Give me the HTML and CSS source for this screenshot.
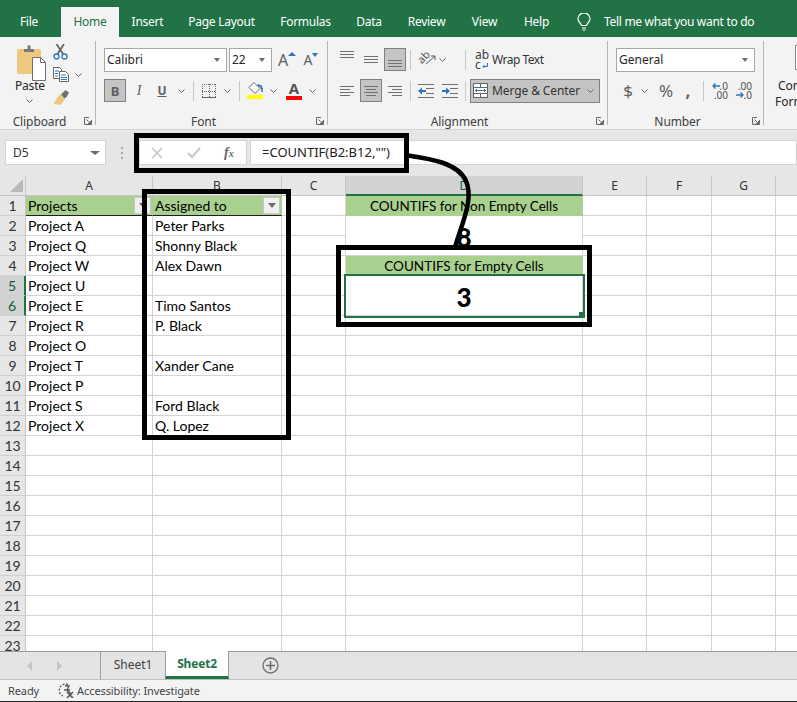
FILE: index.html
```html
<!DOCTYPE html>
<html lang="en">
<head>
<meta charset="utf-8">
<title>COUNTIF for empty cells</title>
<link rel="stylesheet" href="styles.css">
</head>
<body>
<div class="app">
  <nav class="tabs">
    <span class="tab first">File</span>
    <span class="tab active">Home</span>
    <span class="tab">Insert</span>
    <span class="tab">Page Layout</span>
    <span class="tab">Formulas</span>
    <span class="tab">Data</span>
    <span class="tab">Review</span>
    <span class="tab">View</span>
    <span class="tab">Help</span>
    <svg class="bulb" width="14" height="18" viewBox="0 0 14 18" fill="none" stroke="#fff" stroke-width="1.2"><path d="M4.5 12.5C4 10 1 9 1 6a6 6 0 0 1 12 0c0 3-3 4-3.500 6.500z"/><path d="M5 15h4M5.500 17h3"/></svg>
    <span class="tell">Tell me what you want to do</span>
  </nav>

  <section class="ribbon">
    <div class="group clipboard">
      <div class="group-body clip-body">
        <div class="paste">
          <svg width="30" height="36" viewBox="0 0 30 36"><rect x="0" y="4" width="24" height="25" rx="2" fill="#edc87e"/><path d="M7 7V4h3.500V1.500a1.500 1.500 0 0 1 3 0V4H17v3z" fill="#7a7a7a"/><path d="M15.500 12.500h8l5 5v18h-13z" fill="#fff" stroke="#6f6f6f"/><path d="M23.500 12.500v5h5" fill="none" stroke="#6f6f6f"/></svg>
          <span class="paste-label">Paste</span>
          <svg class="chev-svg" width="7" height="4" viewBox="0 0 7 4"><path d="M.5.500l3 3 3-3" fill="none" stroke="#666"/></svg>
        </div>
        <div class="clip-tools">
          <span class="clip-tool"><svg width="15" height="16" viewBox="0 0 15 16" fill="none"><path d="M3.500 0l6.500 10M11 0L4.500 10" stroke="#666" stroke-width="1.800"/><circle cx="3.500" cy="12.500" r="2.500" stroke="#2e75b6" stroke-width="1.300"/><circle cx="11.500" cy="12.500" r="2.500" stroke="#2e75b6" stroke-width="1.300"/></svg></span>
          <span class="clip-tool"><svg width="16" height="15" viewBox="0 0 16 15" fill="none"><path d="M.5.500h6l2 2v9h-8z" fill="#fff" stroke="#666"/><path d="M6.500 4.500h6l3 3v7h-9z" fill="#fff" stroke="#666"/><path d="M2 4h4M2 6.500h3M2 9h3M8 8h5M8 10.500h6M8 12.500h6" stroke="#2e75b6"/></svg><svg class="clip-chev" width="7" height="4" viewBox="0 0 7 4"><path d="M.5.500l3 3 3-3" fill="none" stroke="#666"/></svg></span>
          <span class="clip-tool"><svg width="16" height="15" viewBox="0 0 16 15"><path d="M7 4l5 5-4 5.500c-3 .5-6 0-8-1.500 2-1 3-3 4-5z" fill="#edc87e"/><path d="M8 4.500L12.500 0 16 2.500l-2 4-2.500 2z" fill="#707070"/></svg></span>
        </div>
      </div>
      <div class="group-foot"><span class="group-name">Clipboard</span><svg class="launcher" width="8" height="8" viewBox="0 0 8 8" fill="none" stroke="#666"><path d="M7.500 3V7.500H.5V.5H5M2.500 2.500l4 4M6.500 4v2.500H4"/></svg></div>
    </div>

    <div class="group font-group">
      <div class="group-body">
        <div class="row">
          <div class="combo font-name"><span>Calibri</span><i class="tri"></i></div>
          <div class="combo font-size"><span>22</span><i class="tri"></i></div>
          <span class="grow letter-lg">A<svg width="8" height="4" viewBox="0 0 8 4"><path d="M0 4l4-4 4 4z" fill="#2e75b6"/></svg></span>
          <span class="grow letter-sm">A<svg width="6" height="4" viewBox="0 0 6 4"><path d="M0 0h6L3 4z" fill="#2e75b6"/></svg></span>
        </div>
        <div class="row">
          <span class="btn on wide22 strong">B</span>
          <span class="btn wide22 italic">I</span>
          <span class="btn wide22 under">U</span>
          <svg class="chev" width="7" height="4" viewBox="0 0 7 4"><path d="M.5.500l3 3 3-3" fill="none" stroke="#666"/></svg>
          <i class="sep"></i>
          <span class="btn wide21"><svg width="14" height="14" viewBox="0 0 14 14" fill="none" stroke="#666" stroke-dasharray="1 1"><path d="M0 .5h14M0 7.500h14M.5 0v14M7.500 0v14M13.500 0v14"/><path d="M0 13.500h14" stroke-dasharray="none"/></svg></span>
          <svg class="chev" width="7" height="4" viewBox="0 0 7 4"><path d="M.5.500l3 3 3-3" fill="none" stroke="#666"/></svg>
          <i class="sep"></i>
          <span class="btn wide21 swatch"><svg width="16" height="17" viewBox="0 0 16 17"><path d="M7 .5l6 6-5 5-6-6z" fill="#fff" stroke="#666"/><path d="M10 4c2 0 4 1 4 3l2 0-1.500-3.500L11 2z" fill="#2e75b6"/><path d="M15 6v4" stroke="#2e75b6" stroke-width="1.500"/><rect y="13" width="16" height="4" fill="#ffff00"/></svg></span>
          <svg class="chev" width="7" height="4" viewBox="0 0 7 4"><path d="M.5.500l3 3 3-3" fill="none" stroke="#666"/></svg>
          <span class="btn color-a"><b>A</b><i class="bar"></i></span>
          <svg class="chev" width="7" height="4" viewBox="0 0 7 4"><path d="M.5.500l3 3 3-3" fill="none" stroke="#666"/></svg>
        </div>
      </div>
      <div class="group-foot"><span class="group-name">Font</span><svg class="launcher" width="8" height="8" viewBox="0 0 8 8" fill="none" stroke="#666"><path d="M7.500 3V7.500H.5V.5H5M2.500 2.500l4 4M6.500 4v2.500H4"/></svg></div>
    </div>

    <div class="group align-group">
      <div class="group-body">
        <div class="row">
          <span class="btn wide22 top"><svg width="14" height="7" viewBox="0 0 14 7" stroke="#707070"><path d="M0 .5h14M0 3.500h14M0 6.500h14"/></svg></span>
          <span class="btn wide22 ml2"><svg width="14" height="7" viewBox="0 0 14 7" stroke="#707070"><path d="M0 .5h14M0 3.500h14M0 6.500h14"/></svg></span>
          <span class="btn on wide22 ml2 bottom"><svg width="14" height="7" viewBox="0 0 14 7" stroke="#707070"><path d="M0 .5h14M0 3.500h14M0 6.500h14"/></svg></span>
          <i class="sep sep-align"></i>
          <span class="btn wide20 orient"><span class="orient-text">ab</span><svg width="10" height="10" viewBox="0 0 10 10" fill="none" stroke="#555"><path d="M0 9l9-8M5 1h4v4"/></svg></span>
          <svg class="chev chev-flush" width="7" height="4" viewBox="0 0 7 4"><path d="M.5.500l3 3 3-3" fill="none" stroke="#666"/></svg>
          <i class="sep sep-wide"></i>
          <span class="wrap-mark"><span>ab</span><span>c<svg width="6" height="6" viewBox="0 0 6 6" fill="none" stroke="#2e75b6"><path d="M5.500 0v3.500H1M2.500 2L1 3.500 2.500 5"/></svg></span></span>
          <span class="rib-text wrap-text">Wrap Text</span>
        </div>
        <div class="row">
          <span class="btn wide22"><svg width="14" height="10" viewBox="0 0 14 10" stroke="#707070"><path d="M0 .5h14M0 3.500h10M0 6.500h14M0 9.500h10"/></svg></span>
          <span class="btn on wide22 ml2"><svg width="14" height="10" viewBox="0 0 14 10" stroke="#707070"><path d="M0 .5h14M2 3.500h10M0 6.500h14M2 9.500h10"/></svg></span>
          <span class="btn wide22 ml2"><svg width="14" height="10" viewBox="0 0 14 10" stroke="#707070"><path d="M0 .5h14M4 3.500h10M0 6.500h14M4 9.500h10"/></svg></span>
          <i class="sep sep-align"></i>
          <span class="btn wide20"><svg width="16" height="14" viewBox="0 0 16 14"><path d="M0 .5h16M8 4.500h8M8 9.500h8M0 13.500h16" stroke="#707070"/><path d="M0 7l4-3.500V6h4v2H4v2.500z" fill="#2e75b6"/></svg></span>
          <span class="btn wide20 ml4"><svg width="16" height="14" viewBox="0 0 16 14"><path d="M0 .5h16M8 4.500h8M8 9.500h8M0 13.500h16" stroke="#707070"/><path d="M8 7L4 3.500V6H0v2h4v2.500z" fill="#2e75b6"/></svg></span>
          <i class="sep sep-merge"></i>
          <span class="merge"><svg width="15" height="15" viewBox="0 0 15 15" fill="none"><rect x=".5" y=".5" width="14" height="14" fill="#fff" stroke="#666"/><path d="M.5 4.500h14M.5 10.500h14M7.500 .5v4M7.500 10.500v4" stroke="#666"/><path d="M2.500 7.500h10M4 6l-1.500 1.500L4 9M11 6l1.500 1.500L11 9" stroke="#2e75b6"/></svg><span class="rib-text">Merge &amp; Center</span><svg class="merge-chev" width="7" height="4" viewBox="0 0 7 4"><path d="M.5.500l3 3 3-3" fill="none" stroke="#666"/></svg></span>
        </div>
      </div>
      <div class="group-foot"><span class="group-name">Alignment</span><svg class="launcher" width="8" height="8" viewBox="0 0 8 8" fill="none" stroke="#666"><path d="M7.500 3V7.500H.5V.5H5M2.500 2.500l4 4M6.500 4v2.500H4"/></svg></div>
    </div>

    <div class="group number-group">
      <div class="group-body">
        <div class="row">
          <div class="combo num-format"><span>General</span><i class="tri"></i></div>
        </div>
        <div class="row num-row">
          <span class="btn sym dollar">$</span>
          <svg class="chev chev-flush" width="7" height="4" viewBox="0 0 7 4"><path d="M.5.500l3 3 3-3" fill="none" stroke="#666"/></svg>
          <span class="btn sym percent">%</span>
          <span class="btn sym comma">,</span>
          <i class="sep sep-num"></i>
          <span class="btn decimal"><span class="dec-top"><svg width="8" height="6" viewBox="0 0 8 6"><path d="M8 3H1M3.500.5L1 3l2.500 2.500" fill="none" stroke="#2e75b6" stroke-width="1.300"/></svg>.0</span><span>.00</span></span>
          <span class="btn decimal dec2"><span>.00</span><span class="dec-top"><svg width="8" height="6" viewBox="0 0 8 6"><path d="M0 3h7M4.500.5L7 3 4.500 5.500" fill="none" stroke="#2e75b6" stroke-width="1.300"/></svg>.0</span></span>
        </div>
      </div>
      <div class="group-foot"><span class="group-name">Number</span><svg class="launcher" width="8" height="8" viewBox="0 0 8 8" fill="none" stroke="#666"><path d="M7.500 3V7.500H.5V.5H5M2.500 2.500l4 4M6.500 4v2.500H4"/></svg></div>
    </div>

    <div class="group cond-group">
      <svg class="cond-icon" width="24" height="25" viewBox="0 0 24 25" fill="#fff" stroke="#888"><rect x=".5" y=".5" width="23" height="24"/></svg>
      <span class="cond-text"><span class="cond-first">Conditional</span><br>Formatting</span>
    </div>
  </section>

  <section class="formula-bar">
    <div class="name-box"><span>D5</span><i class="tri tri-name"></i></div>
    <div class="grip"><i></i><i></i><i></i></div>
    <div class="fx-buttons">
      <svg width="12" height="12" viewBox="0 0 12 12" stroke="#c6c6c6" stroke-width="1.600"><path d="M1 1l10 10M11 1L1 11"/></svg>
      <svg width="14" height="12" viewBox="0 0 14 12" fill="none" stroke="#c6c6c6" stroke-width="2"><path d="M1 6l4 4 8-9"/></svg>
      <span class="fx">f<span class="fx-x">x</span></span>
    </div>
    <div class="formula-input">=COUNTIF(B2:B12,"")</div>
  </section>

  <section class="sheet">
    <table class="grid">
      <colgroup><col class="c-rh"><col class="c-a"><col class="c-b"><col class="c-c"><col class="c-d"><col class="c-e"><col class="c-f"><col class="c-g"><col class="c-h"></colgroup>
      <thead>
        <tr><th class="corner"><svg width="13" height="13" viewBox="0 0 13 13"><path d="M13 0v13H0z" fill="#b8b8b8"/></svg></th><th>A</th><th>B</th><th>C</th><th class="col-sel">D</th><th>E</th><th>F</th><th>G</th><th>H</th></tr>
      </thead>
      <tbody>
        <tr><th>1</th><td class="head-cell">Projects<i class="filter"></i></td><td class="head-cell">Assigned to<i class="filter"></i></td><td></td><td class="green" >COUNTIFS for Non Empty Cells</td><td></td><td></td><td></td><td></td></tr>
        <tr><th>2</th><td>Project A</td><td>Peter Parks</td><td></td><td rowspan="2" class="big">8</td><td></td><td></td><td></td><td></td></tr>
        <tr><th>3</th><td>Project Q</td><td>Shonny Black</td><td></td><td></td><td></td><td></td><td></td></tr>
        <tr><th>4</th><td>Project W</td><td>Alex Dawn</td><td></td><td class="green">COUNTIFS for Empty Cells</td><td></td><td></td><td></td><td></td></tr>
        <tr><th class="row-sel">5</th><td>Project U</td><td></td><td></td><td rowspan="2" class="big selected">3</td><td></td><td></td><td></td><td></td></tr>
        <tr><th class="row-sel">6</th><td>Project E</td><td>Timo Santos</td><td></td><td></td><td></td><td></td><td></td></tr>
        <tr><th>7</th><td>Project R</td><td>P. Black</td><td></td><td></td><td></td><td></td><td></td><td></td></tr>
        <tr><th>8</th><td>Project O</td><td></td><td></td><td></td><td></td><td></td><td></td><td></td></tr>
        <tr><th>9</th><td>Project T</td><td>Xander Cane</td><td></td><td></td><td></td><td></td><td></td><td></td></tr>
        <tr><th>10</th><td>Project P</td><td></td><td></td><td></td><td></td><td></td><td></td><td></td></tr>
        <tr><th>11</th><td>Project S</td><td>Ford Black</td><td></td><td></td><td></td><td></td><td></td><td></td></tr>
        <tr><th>12</th><td>Project X</td><td>Q. Lopez</td><td></td><td></td><td></td><td></td><td></td><td></td></tr>
        <tr><th>13</th><td></td><td></td><td></td><td></td><td></td><td></td><td></td><td></td></tr>
        <tr><th>14</th><td></td><td></td><td></td><td></td><td></td><td></td><td></td><td></td></tr>
        <tr><th>15</th><td></td><td></td><td></td><td></td><td></td><td></td><td></td><td></td></tr>
        <tr><th>16</th><td></td><td></td><td></td><td></td><td></td><td></td><td></td><td></td></tr>
        <tr><th>17</th><td></td><td></td><td></td><td></td><td></td><td></td><td></td><td></td></tr>
        <tr><th>18</th><td></td><td></td><td></td><td></td><td></td><td></td><td></td><td></td></tr>
        <tr><th>19</th><td></td><td></td><td></td><td></td><td></td><td></td><td></td><td></td></tr>
        <tr><th>20</th><td></td><td></td><td></td><td></td><td></td><td></td><td></td><td></td></tr>
        <tr><th>21</th><td></td><td></td><td></td><td></td><td></td><td></td><td></td><td></td></tr>
        <tr><th>22</th><td></td><td></td><td></td><td></td><td></td><td></td><td></td><td></td></tr>
        <tr><th>23</th><td></td><td></td><td></td><td></td><td></td><td></td><td></td><td></td></tr>
      </tbody>
    </table>
  </section>

  <section class="sheet-tabs">
    <svg class="nav-arrows" width="36" height="10" viewBox="0 0 36 10" fill="#c4c4c4"><path d="M5 0v10L0 5zM30 0v10l5-5z"/></svg>
    <span class="sheet-tab">Sheet1</span>
    <span class="sheet-tab current">Sheet2</span>
    <svg class="add-sheet" width="17" height="17" viewBox="0 0 17 17" fill="none" stroke="#6f6f6f" stroke-width="1.300"><circle cx="8.500" cy="8.500" r="7.500"/><path d="M8.500 4v9M4 8.500h9" stroke-width="1.600"/></svg>
  </section>

  <footer class="status">
    <span>Ready</span>
    <svg class="a11y" width="17" height="15" viewBox="0 0 17 15" fill="none" stroke="#555" stroke-width="1.300"><path d="M10 1.500A6 6 0 1 0 5 13" stroke-dasharray="2 1.500"/><path d="M7 3h4l-2 4 4 4M6 7h6" /><path d="M9 9l6 6M15 9l-6 6" stroke-width="1.600"/></svg>
    <span>Accessibility: Investigate</span>
  </footer>

  <div class="callout callout-formula"></div>
  <div class="callout callout-names"></div>
  <div class="callout callout-result"></div>
  <svg class="connector" width="80" height="100" viewBox="0 0 80 100" fill="none"><path d="M3 4C30 8 56 12 64 30C72 48 60 72 53 96" stroke="#000" stroke-width="4.500"/></svg>
</div>
</body>
</html>
```
FILE: styles.css
```css
* { box-sizing: border-box; }
html, body { margin: 0; padding: 0; }
body { width: 797px; height: 702px; overflow: hidden; background: #fff; }
.app { position: relative; width: 797px; height: 702px; overflow: hidden; font-family: "Noto Sans", sans-serif; font-size: 12px; color: #333; display: flex; flex-direction: column; }

/* Tab strip */
.tabs { height: 37px; flex: none; background: #217346; color: #fff; display: grid; grid-template-columns: 61px 58px 57px 91px 77px 50px 65px 51px 53px 41px 1fr; align-items: end; }
.tab { height: 30px; line-height: 30px; text-align: center; white-space: nowrap; letter-spacing: -.25px; }
.tab.first { padding-right: 3px; }
.tab.active { background: #f3f3f3; color: #217346; }
.bulb { justify-self: center; margin-bottom: 6px; }
.tell { height: 30px; line-height: 30px; white-space: nowrap; letter-spacing: -.3px; }

/* Ribbon */
.ribbon { height: 93px; flex: none; background: #f3f3f3; border-bottom: 1px solid #d2d2d2; display: flex; padding-top: 4px; }
.group { height: 84px; border-right: 1px solid #b6b6b6; display: flex; flex-direction: column; flex: none; }
.clipboard { width: 96px; }
.font-group { width: 232px; padding-left: 8px; }
.align-group { width: 280px; padding-left: 8px; }
.number-group { width: 156px; padding-left: 8px; }
.cond-group { border: 0; flex: 1; align-items: center; position: relative; overflow: hidden; }
.group-body { flex: 1; padding-top: 7px; display: flex; flex-direction: column; gap: 8px; }
.row { display: flex; align-items: center; height: 23px; }
.group-foot { height: 18px; margin-bottom: -5px; display: flex; align-items: center; color: #404040; }
.font-group .group-foot, .align-group .group-foot, .number-group .group-foot { margin-left: -8px; }
.group-name { flex: 1; text-align: center; letter-spacing: -.1px; }
.launcher { margin: 0 3px 0 5px; flex: none; }

.clip-body { flex-direction: row; gap: 0; padding-top: 0; }
.paste { width: 60px; padding: 4px 0 0 17px; display: flex; flex-direction: column; }
.paste-label { line-height: 16px; width: 29px; margin: -3px 0 0 -2px; color: #262626; letter-spacing: -.2px; }
.chev-svg { margin: 5px 0 0 9px; }
.clip-tools { display: flex; flex-direction: column; margin: -1px 0 0 -7px; }
.clip-tool { height: 23px; display: flex; align-items: center; width: 36px; }
.clip-chev { margin-left: 6px; }

.combo { height: 24px; background: #fff; border: 1px solid #a6a6a6; display: flex; align-items: center; padding: 0 5px 0 2px; color: #262626; flex: none; }
.combo span { flex: 1; }
.font-name { width: 123px; }
.font-size { width: 43px; margin-left: 2px; }
.num-format { width: 139px; }
.tri { width: 0; height: 0; border: 3.500px solid transparent; border-top: 4px solid #6a6a6a; border-bottom: 0; margin-right: 1px; }
.grow { width: 24px; display: flex; align-items: flex-start; justify-content: center; color: #606060; line-height: 1; position: relative; }
.letter-lg { margin-left: 3px; font-size: 16px; }
.letter-sm { font-size: 14px; }

.btn { height: 23px; display: flex; align-items: center; justify-content: center; flex: none; color: #606060; }
.btn.on { background: #c4c4c4; border: 1px solid #808080; }
.wide22 { width: 22px; }
.wide21 { width: 21px; }
.wide20 { width: 20px; }
.ml2 { margin-left: 2px; }
.ml4 { margin-left: 4px; }
.strong { font-weight: 700; font-size: 13px; }
.italic { font-family: "Liberation Serif", serif; font-style: italic; font-size: 14px; margin-left: 2px; }
.under { font-weight: 700; font-size: 12px; text-decoration: underline; margin-left: 1px; }
.chev { margin: 0 2.500px 0 4.500px; flex: none; }
.chev-flush { margin: 0 2.500px; }
.sep { width: 1px; height: 20px; background: #c8c8c8; margin: 0 4px 0 6px; flex: none; }
.color-a { width: 20px; margin-left: 5px; position: relative; flex-direction: column; }
.color-a b { font-size: 15px; line-height: 15px; font-weight: 700; color: #555; }
.bar { width: 16px; height: 4px; background: #f00; }
.top { align-items: flex-start; padding-top: 3px; }
.bottom { align-items: flex-end; padding-bottom: 3px; }
.sep-align { margin: 0 5px 0 4px; }
.sep-wide { margin: 0 9px 0 17px; }
.sep-merge { margin: 0 4px 0 5px; }
.orient { position: relative; justify-content: flex-end; }
.orient-text { position: absolute; left: 1px; top: 3px; transform: rotate(-45deg); font-size: 11px; line-height: 12px; color: #555; }
.wrap-mark { display: flex; flex-direction: column; width: 17px; line-height: 10px; font-size: 12px; color: #404040; }
.wrap-mark svg { margin-left: 1px; }
.rib-text { color: #333; white-space: nowrap; letter-spacing: -.1px; }
.wrap-text { letter-spacing: -.5px; }
.merge { width: 130px; height: 24px; background: #c4c4c4; border: 1px solid #808080; display: flex; align-items: center; padding-left: 2px; gap: 4px; }
.merge .rib-text { flex: 1; }
.merge-chev { margin-right: 5px; }

.sym { font-size: 17px; color: #606060; }
.dollar { width: 20px; margin-left: 2px; }
.percent { width: 24px; margin-left: 4px; }
.comma { width: 20px; margin-left: 0; font-weight: 700; }
.sep-num { margin: 0 4px 0 5px; }
.decimal { width: 20px; flex-direction: column; font-size: 10px; line-height: 9px; color: #505050; align-items: flex-end; }
.dec2 { margin-left: 4px; }
.dec-top { display: flex; align-items: center; }

.cond-icon { position: absolute; left: 31px; top: 4px; }
.cond-text { position: absolute; left: 11px; top: 37px; line-height: 16px; white-space: nowrap; color: #262626; }
.cond-first { margin-left: 3px; }

/* Formula bar */
.formula-bar { height: 46px; flex: none; background: #e6e6e6; display: flex; align-items: flex-start; padding: 10px 0 0 5px; }
.name-box { width: 101px; height: 25px; background: #fff; border: 1px solid #d4d4d4; display: flex; align-items: center; padding: 0 4px 0 7px; color: #333; }
.name-box span { flex: 1; }
.tri-name { border-width: 4px 5px 0; }
.grip { width: 30px; height: 25px; display: flex; flex-direction: column; align-items: center; justify-content: center; gap: 3px; padding-left: 2px; }
.grip i { width: 2px; height: 2px; background: #a8a8a8; }
.fx-buttons { width: 108px; height: 25px; background: #fff; border: 1px solid #d4d4d4; margin-left: 3px; display: flex; align-items: center; padding-left: 11px; gap: 24px; }
.fx { font-family: "Liberation Serif", serif; font-style: italic; font-weight: 700; font-size: 14px; color: #666; margin-left: -1px; line-height: 1; }
.fx-x { font-size: 10px; }
.formula-input { flex: 1; height: 25px; margin-left: 3px; background: #fff; border: 1px solid #d4d4d4; padding-left: 11px; line-height: 23px; font-size: 13px; color: #222; white-space: nowrap; }

/* Sheet */
.sheet { flex: 1; min-height: 0; overflow: hidden; background: #fff; }
.grid { table-layout: fixed; width: 840px; border-collapse: separate; border-spacing: 0; font-family: "Lato", sans-serif; font-size: 14px; color: #000; }
.c-rh { width: 26px; } .c-a { width: 127px; } .c-b { width: 129px; } .c-c { width: 64px; } .c-d { width: 237px; } .c-e { width: 64px; } .c-f { width: 65px; } .c-g { width: 64px; } .c-h { width: 64px; }
.grid th, .grid td { height: 20px; padding: 0; border-right: 1px solid #d4d4d4; border-bottom: 1px solid #d4d4d4; white-space: nowrap; }
.grid th { background: #e6e6e6; font-weight: 400; font-family: "Noto Sans", sans-serif; font-size: 12px; color: #333; text-align: center; border-color: #c6c6c6; }
.grid td { padding: 1px 0 0 2px; position: relative; line-height: 16px; }
.grid tbody th { padding-top: 1px; line-height: 16px; border-bottom-color: #d0d0d0; color: #333; font-family: "Lato", sans-serif; font-size: 14px; }
.corner { position: relative; line-height: 0; }
.corner svg { position: absolute; left: 10px; top: 3px; }
.col-sel { background: #d2d2d2 !important; border-bottom: 2px solid #217346 !important; color: #0d5c34 !important; }
.grid tbody .row-sel { background: #d2d2d2; border-right: 2px solid #217346; color: #0d5c34; }
.grid .head-cell { background: #a9d08e; border-bottom: 1px solid #1e1e1e; border-right-color: #a9d08e; }
.filter { position: absolute; right: 1px; top: 1px; width: 17px; height: 17px; background: #f0f0f0; border: 1px solid #c8c8c8; }
.filter::after { content: ""; position: absolute; left: 4px; top: 5px; border: 4px solid transparent; border-top: 5px solid #6a6a6a; border-bottom: 0; }
.grid td.green { background: #a9d08e; text-align: center; padding: 1px 0 0; font-size: 13.500px; border-color: #a9d08e; }
.grid td.big { text-align: center; padding: 2px 0 0; font-size: 26px; font-weight: 900; line-height: 30px; }
.grid td.selected { outline: 2px solid #217346; outline-offset: 0; z-index: 1; }
.selected::after { content: ""; position: absolute; right: -3px; bottom: -3px; width: 6px; height: 6px; background: #217346; }

/* Sheet tabs */
.sheet-tabs { height: 29px; flex: none; background: #e4e4e4; border-top: 1px solid #9a9a9a; border-bottom: 1px solid #c0c0c0; display: flex; align-items: stretch; padding-left: 27px; }
.nav-arrows { align-self: center; margin-right: 37px; }
.sheet-tab { width: 65px; border-left: 1px solid #9f9f9f; text-align: center; line-height: 26px; color: #404040; }
.sheet-tab.current { width: 64px; margin-top: -1px; background: #fff; border-left: 1px solid #9f9f9f; border-right: 1px solid #9f9f9f; border-bottom: 3px solid #217346; color: #217346; font-weight: 700; letter-spacing: -.2px; }
.add-sheet { align-self: center; margin-left: 33px; }

/* Status bar */
.status { height: 22px; flex: none; background: #f3f3f3; border-bottom: 1px solid #222; display: flex; align-items: center; padding-left: 8px; color: #444; font-size: 11px; letter-spacing: -.1px; white-space: nowrap; }
.a11y { margin: 0 2px 0 19px; }

/* Annotation overlays */
.callout { position: absolute; border: 5px solid #000; pointer-events: none; }
.callout-formula { left: 134px; top: 133px; width: 275px; height: 40px; }
.callout-names { left: 142px; top: 189px; width: 149px; height: 251px; }
.callout-result { left: 336px; top: 245px; width: 256px; height: 82px; }
.connector { position: absolute; left: 402px; top: 151px; pointer-events: none; }
```
